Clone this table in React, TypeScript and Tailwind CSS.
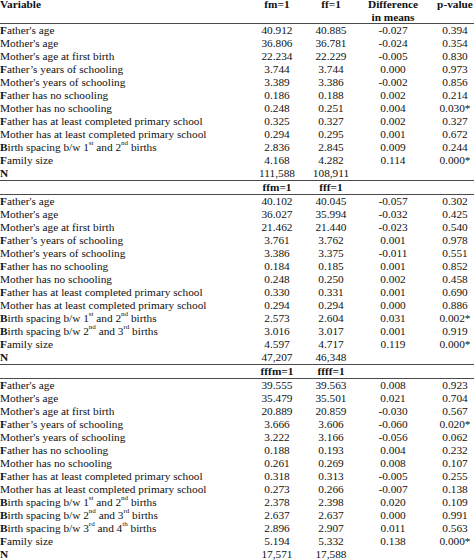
import React from "react";

type Row = [React.ReactNode, string, string, string, string];

const Sup = ({ children }: { children: React.ReactNode }) => (
  <sup className="text-[7px] relative top-[-1px] align-super leading-none">{children}</sup>
);

const lead = (s: string) => {
  const c = s[0];
  if (c === "F" || c === "B" || c === "N") {
    return (
      <>
        <span className="font-bold">{c}</span>
        {s.slice(1)}
      </>
    );
  }
  return s;
};

const b12 = (
  <>
    <span className="font-bold">B</span>irth spacing b/w 1<Sup>st</Sup> and 2<Sup>nd</Sup> births
  </>
);
const b23 = (
  <>
    <span className="font-bold">B</span>irth spacing b/w 2<Sup>nd</Sup> and 3<Sup>rd</Sup> births
  </>
);
const b34 = (
  <>
    <span className="font-bold">B</span>irth spacing b/w 3<Sup>rd</Sup> and 4<Sup>th</Sup> births
  </>
);

const s1: Row[] = [
  [lead("Father's age"), "40.912", "40.885", "-0.027", "0.394"],
  [lead("Mother's age"), "36.806", "36.781", "-0.024", "0.354"],
  [lead("Mother's age at first birth"), "22.234", "22.229", "-0.005", "0.830"],
  [lead("Father\u2019s years of schooling"), "3.744", "3.744", "0.000", "0.973"],
  [lead("Mother's years of schooling"), "3.389", "3.386", "-0.002", "0.856"],
  [lead("Father has no schooling"), "0.186", "0.188", "0.002", "0.214"],
  [lead("Mother has no schooling"), "0.248", "0.251", "0.004", "0.030*"],
  [lead("Father has at least completed primary school"), "0.325", "0.327", "0.002", "0.327"],
  [lead("Mother has at least completed primary school"), "0.294", "0.295", "0.001", "0.672"],
  [b12, "2.836", "2.845", "0.009", "0.244"],
  [lead("Family size"), "4.168", "4.282", "0.114", "0.000*"],
  [lead("N"), "111,588", "108,911", "", ""],
];

const s2: Row[] = [
  [lead("Father's age"), "40.102", "40.045", "-0.057", "0.302"],
  [lead("Mother's age"), "36.027", "35.994", "-0.032", "0.425"],
  [lead("Mother's age at first birth"), "21.462", "21.440", "-0.023", "0.540"],
  [lead("Father\u2019s years of schooling"), "3.761", "3.762", "0.001", "0.978"],
  [lead("Mother's years of schooling"), "3.386", "3.375", "-0.011", "0.551"],
  [lead("Father has no schooling"), "0.184", "0.185", "0.001", "0.852"],
  [lead("Mother has no schooling"), "0.248", "0.250", "0.002", "0.458"],
  [lead("Father has at least completed primary school"), "0.330", "0.331", "0.001", "0.690"],
  [lead("Mother has at least completed primary school"), "0.294", "0.294", "0.000", "0.886"],
  [b12, "2.573", "2.604", "0.031", "0.002*"],
  [b23, "3.016", "3.017", "0.001", "0.919"],
  [lead("Family size"), "4.597", "4.717", "0.119", "0.000*"],
  [lead("N"), "47,207", "46,348", "", ""],
];

const s3: Row[] = [
  [lead("Father's age"), "39.555", "39.563", "0.008", "0.923"],
  [lead("Mother's age"), "35.479", "35.501", "0.021", "0.704"],
  [lead("Mother's age at first birth"), "20.889", "20.859", "-0.030", "0.567"],
  [lead("Father\u2019s years of schooling"), "3.666", "3.606", "-0.060", "0.020*"],
  [lead("Mother's years of schooling"), "3.222", "3.166", "-0.056", "0.062"],
  [lead("Father has no schooling"), "0.188", "0.193", "0.004", "0.232"],
  [lead("Mother has no schooling"), "0.261", "0.269", "0.008", "0.107"],
  [lead("Father has at least completed primary school"), "0.318", "0.313", "-0.005", "0.255"],
  [lead("Mother has at least completed primary school"), "0.273", "0.266", "-0.007", "0.138"],
  [b12, "2.378", "2.398", "0.020", "0.109"],
  [b23, "2.637", "2.637", "0.000", "0.991"],
  [b34, "2.896", "2.907", "0.011", "0.563"],
  [lead("Family size"), "5.194", "5.332", "0.138", "0.000*"],
  [lead("N"), "17,571", "17,588", "", ""],
];

const grid = "grid grid-cols-[250px_54px_54px_70px_54px]";

const Rule = () => <div className="h-px bg-[#4a4a4a] w-[490px]" />;

const Rows = ({ rows }: { rows: Row[] }) => (
  <div>
    {rows.map((r, i) => (
      <div key={i} className={`${grid} h-[13px] whitespace-nowrap`}>
        <div>{r[0]}</div>
        <div className="text-center">{r[1]}</div>
        <div className="text-center">{r[2]}</div>
        <div className="text-center">{r[3]}</div>
        <div className="text-center">{r[4]}</div>
      </div>
    ))}
  </div>
);

const Sub = ({ a, b }: { a: string; b: string }) => (
  <div className={`${grid} h-[13px] font-bold whitespace-nowrap`}>
    <div />
    <div className="text-center">{a}</div>
    <div className="text-center">{b}</div>
    <div />
    <div />
  </div>
);

export default function App() {
  return (
    <div className="w-[474px] h-[560px] overflow-hidden bg-white text-[#111] font-[family-name:'Liberation_Serif',serif] text-[11.3px] leading-[13px]">
      <div className="-mt-[2px]">
        <div className={`${grid} font-bold whitespace-nowrap h-[25px]`}>
          <div>Variable</div>
          <div className="text-center">fm=1</div>
          <div className="text-center">ff=1</div>
          <div className="text-center">
            Difference
            <br />
            in means
          </div>
          <div className="text-center">p-value</div>
        </div>
        <Rule />
        <Rows rows={s1} />
        <Rule />
        <Sub a="ffm=1" b="fff=1" />
        <Rule />
        <Rows rows={s2} />
        <Rule />
        <Sub a="fffm=1" b="ffff=1" />
        <Rule />
        <Rows rows={s3} />
      </div>
    </div>
  );
}
